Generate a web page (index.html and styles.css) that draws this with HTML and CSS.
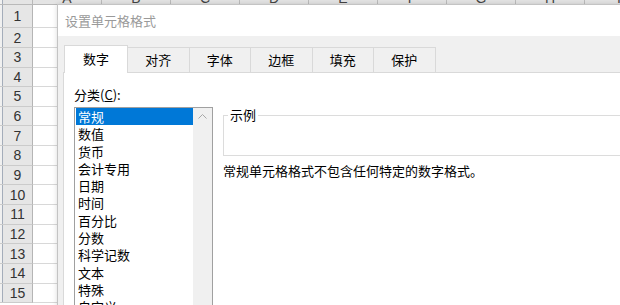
FILE: index.html
```html
<!DOCTYPE html>
<html lang="zh-CN">
<head>
<meta charset="utf-8">
<title>设置单元格格式</title>
<link rel="stylesheet" href="styles.css">
</head>
<body>
<div class="sheet">
  <div class="colhead">
    <div class="corner"></div>
    <div class="col"><span>A</span></div>
    <div class="col"><span>B</span></div>
    <div class="col"><span>C</span></div>
    <div class="col"><span>D</span></div>
    <div class="col"><span>E</span></div>
    <div class="col"><span>F</span></div>
    <div class="col"><span>G</span></div>
    <div class="col"><span>H</span></div>
    <div class="col"><span>I</span></div>
  </div>
  <div class="row first"><div class="rh">1</div><div class="cell"></div><div class="cell"></div></div>
  <div class="row"><div class="rh">2</div><div class="cell"></div><div class="cell"></div></div>
  <div class="row"><div class="rh">3</div><div class="cell"></div><div class="cell"></div></div>
  <div class="row"><div class="rh">4</div><div class="cell"></div><div class="cell"></div></div>
  <div class="row"><div class="rh">5</div><div class="cell"></div><div class="cell"></div></div>
  <div class="row"><div class="rh">6</div><div class="cell"></div><div class="cell"></div></div>
  <div class="row"><div class="rh">7</div><div class="cell"></div><div class="cell"></div></div>
  <div class="row"><div class="rh">8</div><div class="cell"></div><div class="cell"></div></div>
  <div class="row"><div class="rh">9</div><div class="cell"></div><div class="cell"></div></div>
  <div class="row"><div class="rh">10</div><div class="cell"></div><div class="cell"></div></div>
  <div class="row"><div class="rh">11</div><div class="cell"></div><div class="cell"></div></div>
  <div class="row"><div class="rh">12</div><div class="cell"></div><div class="cell"></div></div>
  <div class="row"><div class="rh">13</div><div class="cell"></div><div class="cell"></div></div>
  <div class="row"><div class="rh">14</div><div class="cell"></div><div class="cell"></div></div>
  <div class="row"><div class="rh">15</div><div class="cell"></div><div class="cell"></div></div>
</div>

<div class="dialog">
  <div class="titlebar">设置单元格格式</div>
  <div class="dbody">
    <div class="tabs">
      <div class="tab active">数字</div>
      <div class="tab">对齐</div>
      <div class="tab">字体</div>
      <div class="tab">边框</div>
      <div class="tab">填充</div>
      <div class="tab">保护</div>
    </div>
    <div class="panel">
      <div class="label">分类(<u>C</u>):</div>
      <div class="list">
        <div class="items">
          <div class="item selected">常规</div>
          <div class="item">数值</div>
          <div class="item">货币</div>
          <div class="item">会计专用</div>
          <div class="item">日期</div>
          <div class="item">时间</div>
          <div class="item">百分比</div>
          <div class="item">分数</div>
          <div class="item">科学记数</div>
          <div class="item">文本</div>
          <div class="item">特殊</div>
          <div class="item">自定义</div>
        </div>
        <div class="vscroll">
          <svg class="chev" width="19" height="17" viewBox="0 0 19 17"><polyline points="5.5,10.5 9.5,6.5 13.5,10.5" fill="none" stroke="#a8a8a8" stroke-width="1"/></svg>
        </div>
      </div>
      <div class="right">
        <fieldset class="sample"><legend>示例</legend></fieldset>
        <p class="desc">常规单元格格式不包含任何特定的数字格式。</p>
      </div>
    </div>
  </div>
</div>
</body>
</html>
```

FILE: styles.css
```css
* { box-sizing: border-box; }
html, body { margin: 0; padding: 0; }
body {
  width: 620px;
  height: 305px;
  overflow: hidden;
  position: relative;
  background: #fff;
  font-family: "Noto Sans CJK SC", "Noto Sans", sans-serif;
}

/* spreadsheet */
.sheet { display: flex; flex-direction: column; }
.colhead {
  display: grid;
  grid-template-columns: 33px repeat(9, 69px);
  height: 5px;
  overflow: hidden;
  background: #e4e4e4;
  border-bottom: 1px solid #b9b9b9;
}
.corner {
  background: #e4e4e4;
  border-right: 1px solid #b9b9b9;
  box-shadow: inset 2px 0 0 #f0f0f0, inset 3px 0 0 #a4adba;
}
.col {
  border-right: 1px solid #bcbcbc;
  text-align: center;
  font-family: "Liberation Sans", Arial, sans-serif;
  font-size: 14px;
  color: #444;
}
.col span { display: block; line-height: 14px; margin-top: -9px; }

.row {
  display: grid;
  grid-template-columns: 33px 69px 69px;
  height: 19.66px;
}
.row.first { height: 23.2px; }
.rh {
  background: #e6e6e6;
  border-right: 1px solid #b5b5b5;
  border-bottom: 1px solid #cbcbcb;
  box-shadow: inset 2px 0 0 #f0f0f0, inset 3px 0 0 #a4adba;
  padding-left: 3px;
  display: flex;
  align-items: center;
  justify-content: center;
  font-family: "Liberation Sans", Arial, sans-serif;
  font-size: 14px;
  color: #333;
}
.cell {
  border-right: 1px solid #d8d8d8;
  border-bottom: 1px solid #d8d8d8;
}

/* dialog */
.dialog {
  position: absolute;
  left: 57px;
  top: 4px;
  width: 600px;
  height: 340px;
  border: 1px solid #c4c4c4;
  background: #f0f0f0;
  box-shadow: 0 0 5px rgba(0, 0, 0, 0.15);
  display: flex;
  flex-direction: column;
}
.titlebar {
  flex: none;
  height: 31px;
  background: #fff;
  padding-left: 7px;
  line-height: 31px;
  font-size: 13px;
  color: #9a9a9a;
}
.dbody {
  flex: 1;
  padding-left: 5px;
  display: flex;
  flex-direction: column;
}
.tabs {
  flex: none;
  display: flex;
  align-items: flex-end;
  height: 36px;
  padding-left: 1px;
}
.tab {
  width: 62.5px;
  height: 25px;
  border: 1px solid #d9d9d9;
  border-bottom: 0;
  background: #f0f0f0;
  text-align: center;
  font-size: 13px;
  line-height: 24px;
  color: #000;
}
.tab + .tab { margin-left: -1px; }
.tab.active {
  width: 64px;
  height: 28px;
  margin-bottom: -1px;
  background: #fff;
  line-height: 26px;
  z-index: 1;
}
.panel {
  flex: 1;
  background: #fff;
  border-top: 1px solid #d9d9d9;
  border-left: 1px solid #d9d9d9;
  padding: 13px 0 0 10px;
  display: grid;
  grid-template-columns: 139px 1fr;
  grid-template-rows: auto 1fr;
  column-gap: 10px;
  align-content: start;
  font-size: 13px;
  color: #000;
}
.label {
  grid-column: 1;
  line-height: 17px;
  margin-bottom: 4px;
}
.list {
  grid-column: 1;
  grid-row: 2;
  height: 260px;
  border: 1px solid #a0a0a0;
  display: flex;
}
.items { flex: 1; padding-left: 1px; }
.item {
  height: 17.3px;
  line-height: 17.3px;
  padding-left: 2px;
  white-space: nowrap;
}
.item.selected { background: #0078d7; color: #fff; }
.vscroll {
  flex: none;
  width: 19px;
  background: #f0f0f0;
}
.chev { display: block; }

.right { grid-column: 2; grid-row: 2; }
.sample {
  margin: 0;
  padding: 0;
  min-width: 0;
  height: 49px;
  border: 1px solid #dcdcdc;
}
.sample legend {
  margin-left: 4px;
  padding: 0 2px;
  font-size: 13px;
  line-height: 16px;
}
.desc {
  margin: 6px 0 0;
  line-height: 17px;
  white-space: nowrap;
}
```
